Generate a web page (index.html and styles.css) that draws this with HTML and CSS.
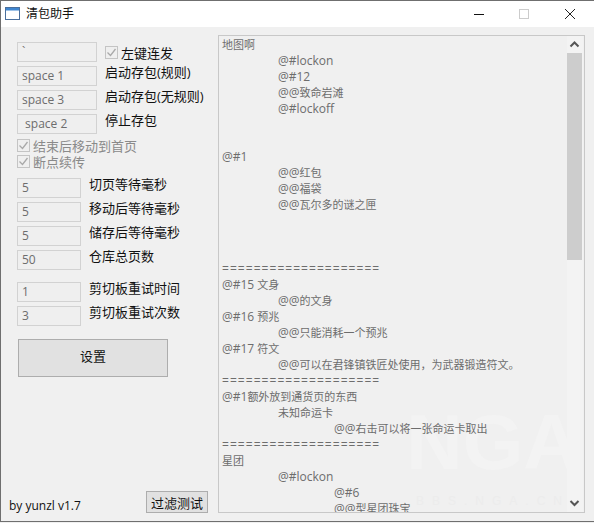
FILE: index.html
```html
<!DOCTYPE html>
<html lang="zh-CN">
<head>
<meta charset="utf-8">
<title>清包助手</title>
<link rel="stylesheet" href="styles.css">
</head>
<body>
<div class="window">
  <header class="titlebar">
    <svg class="app-icon" width="16" height="14" viewBox="0 0 16 14"><rect x="0.5" y="0.5" width="14" height="12" fill="#fff" stroke="#4a6f9c"/><rect x="1" y="1" width="13" height="2.5" fill="#3f86d0"/></svg>
    <span class="title">清包助手</span>
    <div class="controls">
      <svg class="ctl" width="46" height="26" viewBox="0 0 46 26"><path d="M18 13.5h10" stroke="#111" fill="none"/></svg>
      <svg class="ctl" width="46" height="26" viewBox="0 0 46 26"><rect x="17.5" y="8.5" width="9" height="9" stroke="#ccc" fill="none"/></svg>
      <svg class="ctl" width="46" height="26" viewBox="0 0 46 26"><path d="M17 8l10 10M27 8l-10 10" stroke="#222" fill="none"/></svg>
    </div>
  </header>
  <main class="client">
    <section class="side">
      <div class="form">
        <div class="rows">
          <div class="row"><input class="field wide" value="`" disabled><label class="check big"><span class="box"><svg width="11" height="11" viewBox="0 0 11 11"><path d="M1.5 5.5l3 3 5-6.5" stroke="#a9a9a9" stroke-width="1.3" fill="none"/></svg></span>左键连发</label></div>
          <div class="row"><input class="field wide" value="space 1" disabled><span class="label">启动存包(规则)</span></div>
          <div class="row"><input class="field wide" value="space 3" disabled><span class="label">启动存包(无规则)</span></div>
          <div class="row"><input class="field wide" value=" space 2" disabled><span class="label">停止存包</span></div>
        </div>
        <div class="checks">
          <label class="check"><span class="box"><svg width="11" height="11" viewBox="0 0 11 11"><path d="M1.5 5.5l3 3 5-6.5" stroke="#a9a9a9" stroke-width="1.3" fill="none"/></svg></span>结束后移动到首页</label>
          <label class="check"><span class="box"><svg width="11" height="11" viewBox="0 0 11 11"><path d="M1.5 5.5l3 3 5-6.5" stroke="#a9a9a9" stroke-width="1.3" fill="none"/></svg></span>断点续传</label>
        </div>
        <div class="rows small">
          <div class="row"><input class="field narrow" value="5" disabled><span class="label">切页等待毫秒</span></div>
          <div class="row"><input class="field narrow" value="5" disabled><span class="label">移动后等待毫秒</span></div>
          <div class="row"><input class="field narrow" value="5" disabled><span class="label">储存后等待毫秒</span></div>
          <div class="row"><input class="field narrow" value="50" disabled><span class="label">仓库总页数</span></div>
        </div>
        <div class="rows clip">
          <div class="row"><input class="field narrow" value="1" disabled><span class="label">剪切板重试时间</span></div>
          <div class="row"><input class="field narrow" value="3" disabled><span class="label">剪切板重试次数</span></div>
        </div>
        <button class="settings" type="button">设置</button>
      </div>
      <footer class="foot">
        <span class="by">by yunzl v1.7</span>
        <button class="filter" type="button">过滤测试</button>
      </footer>
    </section>
    <section class="log">
      <div class="mark"><span class="mark-big">NGA</span><span class="mark-small">BBS.NGA.CN</span></div>
      <pre class="log-text"><span class="zh">地图啊</span>
	@#lockon
	@#12
	@@<span class="zh">致命岩滩</span>
	@#lockoff


@#1
	@@<span class="zh">红包</span>
	@@<span class="zh">福袋</span>
	@@<span class="zh">瓦尔多的谜之匣</span>



<span class="rule">====================</span>
@#15 <span class="zh">文身</span>
	@@<span class="zh">的文身</span>
@#16 <span class="zh">预兆</span>
	@@<span class="zh">只能消耗一个预兆</span>
@#17 <span class="zh">符文</span>
	@@<span class="zh">可以在君锋镇铁匠处使用，为武器锻造符文。</span>
<span class="rule">====================</span>
@#1<span class="zh">额外放到通货页的东西</span>
	<span class="zh">未知命运卡</span>
		@@<span class="zh">右击可以将一张命运卡取出</span>
<span class="rule">====================</span>
<span class="zh">星团</span>
	@#lockon
		@#6
		@@<span class="zh">型星团珠宝</span></pre>
      <div class="scrollbar">
        <svg class="arrow" width="15" height="17" viewBox="0 0 15 17"><path d="M3.5 10.5l4-4 4 4" stroke="#555" stroke-width="2" fill="none"/></svg>
        <div class="track"><div class="thumb"></div></div>
        <svg class="arrow" width="15" height="17" viewBox="0 0 15 17"><path d="M3.5 6l4 4 4-4" stroke="#555" stroke-width="2" fill="none"/></svg>
      </div>
    </section>
  </main>
</div>
</body>
</html>
```
FILE: styles.css
```css
* { box-sizing: border-box; }
html, body { margin: 0; height: 100%; }
body {
  font-family: "Open Sans", "Noto Sans CJK SC", sans-serif;
  font-size: 12px;
  color: #111;
  background: #f0f0f0;
}
.window {
  width: 594px;
  height: 522px;
  display: flex;
  flex-direction: column;
  border: 1px solid #6f6f6f;
  border-right: 0;
  overflow: hidden;
}
.titlebar {
  height: 26px;
  flex: none;
  background: #fff;
  display: flex;
  align-items: center;
  padding-left: 4px;
}
.app-icon { margin-right: 5px; }
.title { font-size: 12px; margin-top: -2px; }
.controls { margin-left: auto; display: flex; }
.ctl { display: block; }
.client { flex: 1; display: flex; min-height: 0; background: #f0f0f0; }
.side {
  width: 217px;
  flex: none;
  display: flex;
  flex-direction: column;
  padding: 15px 0 8px;
}
.form { padding-left: 16px; }
.rows { display: flex; flex-direction: column; gap: 4px; }
.row { display: flex; height: 20px; }
.field {
  height: 20px;
  border: 1px solid #d2d2d2;
  background: #efefef;
  color: #6d6d6d;
  font: inherit;
  line-height: 16px;
  padding: 0 4px 2px;
  margin: 0;
  white-space: pre;
}
.field:disabled { color: #6d6d6d; -webkit-text-fill-color: #6d6d6d; opacity: 1; }
.wide { width: 80px; margin-right: 8px; }
.narrow { width: 64px; margin-right: 8px; }
.label { font-size: 13px; line-height: 16px; margin-top: -2px; white-space: nowrap; }
.check { display: flex; align-items: center; height: 16px; color: #8a8a8a; font-size: 13px; white-space: nowrap; }
.check.big { color: #111; height: 18px; margin-top: 1px; }
.box {
  width: 13px;
  height: 13px;
  border: 1px solid #c4c4c4;
  background: #efefef;
  margin-right: 3px;
  flex: none;
  display: flex;
  align-items: center;
  justify-content: center;
}
.checks { margin-top: 3px; }
.small { margin-top: 9px; }
.clip { margin-top: 12px; }
.settings {
  display: block;
  width: 150px;
  height: 38px;
  margin: 13px 0 0 1px;
  background: #e1e1e1;
  border: 1px solid #adadad;
  font: inherit;
  font-size: 13px;
  color: #111;
  padding: 0 0 5px;
}
.foot {
  margin-top: auto;
  display: flex;
  align-items: flex-end;
  justify-content: space-between;
  padding: 0 10px 0 8px;
}
.by { font-size: 12px; line-height: 16px; margin-bottom: -1px; }
.filter {
  width: 62px;
  height: 22px;
  background: #e1e1e1;
  border: 1px solid #adadad;
  font: inherit;
  font-size: 13px;
  color: #111;
  padding: 0;
  white-space: nowrap;
}
.log {
  position: relative;
  width: 367px;
  height: 478px;
  margin-top: 8px;
  border: 1px solid #c8c8c8;
  background: #f0f0f0;
  display: flex;
  overflow: hidden;
}
.log-text {
  position: relative;
  flex: 1;
  min-width: 0;
  margin: 0;
  padding: 1px 3px 0;
  font: inherit;
  line-height: 16px;
  color: #6d6d6d;
  tab-size: 56px;
  white-space: pre;
  overflow: hidden;
}
.zh { font-size: 11px; }
.rule { letter-spacing: 1.05px; }
.scrollbar {
  position: relative;
  width: 16px;
  flex: none;
  margin-right: 1px;
  display: flex;
  flex-direction: column;
  background: #f3f3f3;
}
.arrow { display: block; flex: none; }
.track { flex: 1; }
.thumb { width: 15px; height: 207px; background: #cdcdcd; }
.mark {
  position: absolute;
  left: 186px;
  top: 362px;
  width: 176px;
  display: flex;
  flex-direction: column;
  align-items: center;
  pointer-events: none;
}
.mark-big { font-family: "Liberation Sans", sans-serif; font-size: 78px; line-height: 88px; font-weight: 700; color: #f3f3f3; }
.mark-small { font-family: "Liberation Sans", sans-serif; font-size: 12px; letter-spacing: 8px; line-height: 18px; white-space: nowrap; color: #ececec; margin-top: 6px; }
```
